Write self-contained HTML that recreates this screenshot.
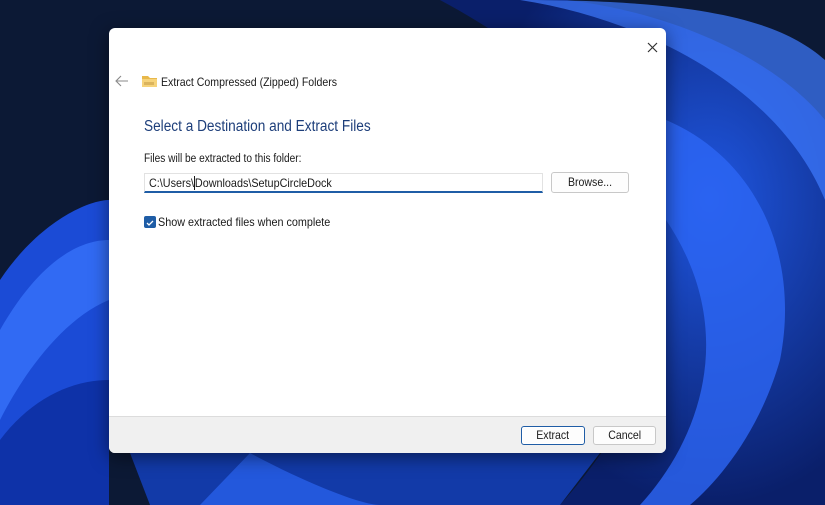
<!DOCTYPE html>
<html><head><style>
*{margin:0;padding:0;box-sizing:border-box}
body{width:825px;height:505px;overflow:hidden;position:relative;background:#0b1a3a;font-family:"Liberation Sans",sans-serif;}
.bg{position:absolute;left:0;top:0}
.dlg{position:absolute;left:109px;top:28px;width:557px;height:425px;background:#fff;border-radius:6px;overflow:hidden;box-shadow:0 4px 18px rgba(0,0,0,.5)}
.t{position:absolute;white-space:nowrap;color:#1a1a1a;transform:scaleX(.88);transform-origin:0 0}
.foot{position:absolute;left:0;top:388px;width:557px;height:37px;background:#f0f0f0;border-top:1px solid #dcdcdc}
.btn{position:absolute;height:19px;border:1px solid #c8c8c8;border-radius:3px;background:#fdfdfd;font-size:12px;text-align:center;line-height:17px;color:#1a1a1a}
.btn span{display:inline-block;transform:scaleX(.88)}
</style></head><body>
<svg class="bg" width="825" height="505" viewBox="0 0 825 505">
<defs>
<radialGradient id="g1" cx="0.7" cy="0.4" r="0.6"><stop offset="0" stop-color="#1f56e0"/><stop offset="1" stop-color="#0a1f6a"/></radialGradient>
</defs>
<rect width="825" height="505" fill="#0c1935"/>
<path d="M440 0 C600 -20 760 40 825 120 L825 505 L560 505 C700 350 720 150 440 0Z" fill="url(#g1)"/>
<path d="M520 0 C650 20 780 90 825 200 L825 60 C780 20 700 0 520 0Z" fill="#3f7bff" opacity=".7"/>
<path d="M0 280 C40 220 90 200 109 200 L109 505 L0 505Z" fill="#1b4bd6"/>
<path d="M0 330 C40 260 80 240 109 240 L109 300 C60 320 20 380 0 420Z" fill="#3a78ff" opacity=".7"/>
<path d="M0 440 C30 400 70 380 109 380 L109 505 L0 505Z" fill="#0e32a8"/>
<path d="M666 120 C760 160 800 260 780 360 C760 430 720 480 690 505 L640 505 C700 440 740 330 666 220Z" fill="#2d66f5" opacity=".8"/>
<path d="M130 453 L600 453 L560 505 L150 505Z" fill="#123aa8"/>
<path d="M250 453 C300 480 360 505 380 505 L200 505Z" fill="#2f6cff" opacity=".6"/>
</svg>
<div class="dlg">
<svg style="position:absolute;left:538px;top:14px" width="11" height="11"><path d="M1 1L10 10M10 1L1 10" stroke="#333" stroke-width="1.2"/></svg>
<svg style="position:absolute;left:6px;top:47px" width="14" height="12"><path d="M13 6H2M6 1L1 6L6 11" stroke="#888" stroke-width="1.1" fill="none"/></svg>
<svg style="position:absolute;left:32px;top:46px" width="17" height="14"><path d="M1 2h6l2 2h7v9H1z" fill="#e8b84a"/><rect x="1" y="5" width="15" height="8" fill="#f6d37a"/><rect x="3" y="8" width="10" height="3" fill="#c9a04a" opacity=".6"/></svg>
<div class="t" style="left:52px;top:47px;font-size:12px">Extract Compressed (Zipped) Folders</div>
<div class="t" style="left:35px;top:90px;font-size:15.5px;color:#1d3e7a">Select a Destination and Extract Files</div>
<div class="t" style="left:35px;top:125px;font-size:11.5px">Files will be extracted to this folder:</div>
<div style="position:absolute;left:35px;top:145px;width:399px;height:20px;border:1px solid #e2e2e2;border-bottom:2px solid #1f5da6;background:#fff"></div>
<div class="t" style="left:40px;top:148px;font-size:12px;transform:scaleX(.9)">C:\Users\<span style="border-left:1px solid #000">D</span>ownloads\SetupCircleDock</div>
<div class="btn" style="left:442px;top:144px;width:78px;height:21px;line-height:19px"><span>Browse...</span></div>
<div style="position:absolute;left:35px;top:188px;width:12px;height:12px;background:#1f5da6;border-radius:2px"><svg width="12" height="12"><path d="M3 6l2 2 4-4" stroke="#fff" stroke-width="1.3" fill="none"/></svg></div>
<div class="t" style="left:49px;top:187px;font-size:12px;transform:scaleX(.9)">Show extracted files when complete</div>
<div class="foot">
<div class="btn" style="left:412px;top:9px;width:64px;border:1px solid #1f5da6;box-shadow:inset 0 0 0 1px #fff"><span>Extract</span></div>
<div class="btn" style="left:484px;top:9px;width:63px"><span>Cancel</span></div>
</div>
</div>
</body></html>
